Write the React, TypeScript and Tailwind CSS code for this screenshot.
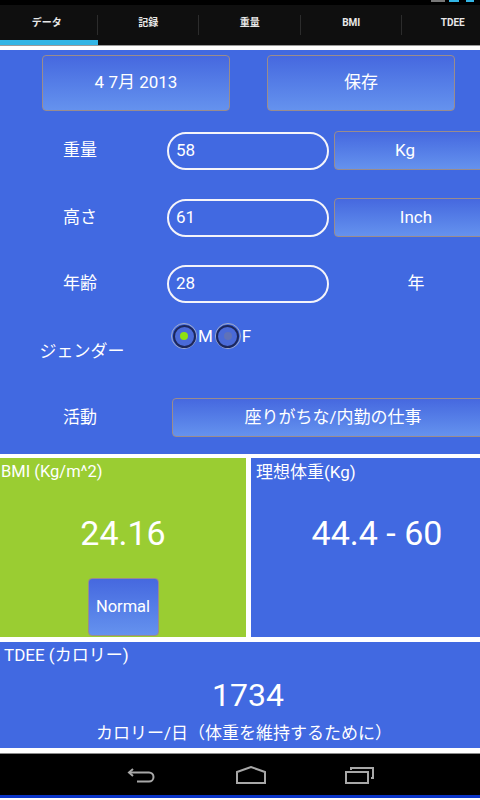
import React from "react";

const font = { fontFamily: "Roboto, 'Noto Sans CJK JP', sans-serif" };

const tabs = ["データ", "記録", "重量", "BMI", "TDEE"];

function GradButton({ children, className = "" }: { children: React.ReactNode; className?: string }) {
  return (
    <div
      className={`flex items-center justify-center rounded-[4px] border border-[#9a8c8c] bg-gradient-to-b from-[#4668df] to-[#6592ee] text-white ${className}`}
    >
      {children}
    </div>
  );
}

function Radio({ checked, label }: { checked: boolean; label: string }) {
  return (
    <div className="flex items-center">
      <div className="flex h-[26px] w-[26px] items-center justify-center rounded-full border border-[#a4acc8]">
        <div className="flex h-[23px] w-[23px] items-center justify-center rounded-full border-2 border-[#1c275c] bg-[#4a6ad8]">
          <div className={`h-[8px] w-[8px] rounded-full ${checked ? "bg-[#8fe010]" : "bg-[#6072b8]"}`} />
        </div>
      </div>
      <span className="ml-[1px] text-[17px] leading-none text-white">{label}</span>
    </div>
  );
}

function InputRow({ label, value, children }: { label: string; value: string; children: React.ReactNode }) {
  return (
    <div className="flex items-center">
      <div className="w-[160px] shrink-0 text-center text-[17px] text-white">{label}</div>
      <div className="ml-[7px] flex h-[38px] w-[162px] shrink-0 items-center rounded-[19px] border-2 border-[#f4f4fa] pl-[7px] text-[17px] text-white">
        {value}
      </div>
      {children}
    </div>
  );
}

export default function App() {
  return (
    <div className="relative h-[800px] w-[480px] overflow-hidden bg-white" style={font}>
      {/* status bar remains */}
      <div className="relative h-[5px] bg-black">
        <div className="absolute left-[431px] top-0 h-[2px] w-[14px] bg-[#777]" />
        <div className="absolute left-[449px] top-0 h-[2px] w-[10px] bg-[#33b5e5]" />
        <div className="absolute left-[466px] top-0 h-[2px] w-[8px] bg-[#33b5e5]" />
      </div>

      {/* tabs */}
      <div className="ml-[-4px] flex h-[40px] bg-[#0f0f0f]">
        {tabs.map((t, i) => (
          <div key={t} className="relative flex w-[101.5px] shrink-0 flex-col">
            <div className="flex flex-1 items-center justify-center text-[10px] font-bold text-[#e8e8e8]">{t}</div>
            {i === 0 ? <div className="ml-[4px] h-[5px] bg-[#33b5e5]" /> : <div className="h-[5px]" />}
            {i < 4 && <div className="absolute right-0 top-[10px] h-[20px] w-px bg-[#2c2c2c]" />}
          </div>
        ))}
      </div>
      <div className="h-px bg-[#9a9a9a]" />
      <div className="h-[4px] bg-white" />

      {/* form */}
      <div className="h-[404px] bg-[#4169e1] pt-[5px]">
        <div className="flex">
          <GradButton className="ml-[42px] h-[56px] w-[188px] shrink-0 text-[17px]">4 7月 2013</GradButton>
          <GradButton className="ml-[37px] h-[56px] w-[188px] shrink-0 text-[17px]">保存</GradButton>
        </div>

        <div className="mt-[20px]">
          <InputRow label="重量" value="58">
            <GradButton className="ml-[5px] h-[39px] w-[164px] shrink-0 pr-[22px] text-[17px]">Kg</GradButton>
          </InputRow>
        </div>
        <div className="mt-[28px]">
          <InputRow label="高さ" value="61">
            <GradButton className="ml-[5px] h-[39px] w-[164px] shrink-0 text-[17px]">Inch</GradButton>
          </InputRow>
        </div>
        <div className="mt-[28px]">
          <InputRow label="年齢" value="28">
            <div className="ml-[5px] w-[164px] shrink-0 text-center text-[17px] text-white">年</div>
          </InputRow>
        </div>

        <div className="mt-[20px] flex items-start">
          <div className="mt-[16px] w-[164px] shrink-0 text-center text-[17px] leading-[24px] text-white">ジェンダー</div>
          <div className="ml-[7px] flex gap-[2px]">
            <Radio checked label="M" />
            <Radio checked={false} label="F" />
          </div>
        </div>

        <div className="mt-[35px] flex items-center">
          <div className="w-[160px] shrink-0 text-center text-[17px] text-white">活動</div>
          <GradButton className="ml-[12px] h-[39px] w-[322px] shrink-0 text-[17px]">座りがちな/内勤の仕事</GradButton>
        </div>
      </div>

      <div className="h-[4px] bg-white" />

      {/* result cards */}
      <div className="flex h-[179px] gap-[5px]">
        <div className="flex w-[246px] shrink-0 flex-col items-center bg-[#9acd32]">
          <div className="self-start pl-[1px] pt-[4px] text-[16.5px] leading-[20px] text-white">BMI (Kg/m^2)</div>
          <div className="mt-[31px] text-[34px] leading-[40px] text-white">24.16</div>
          <GradButton className="mt-[25px] h-[58px] w-[71px] text-[16.5px]">Normal</GradButton>
        </div>
        <div className="flex flex-1 flex-col items-center bg-[#4169e1]">
          <div className="self-start pl-[5px] pt-[4px] text-[17px] leading-[20px] text-white">理想体重(Kg)</div>
          <div className="mt-[31px] pl-[23px] text-[34px] leading-[40px] text-white">44.4 - 60</div>
        </div>
      </div>

      <div className="h-[5px] bg-white" />

      <div className="flex h-[106px] flex-col items-center bg-[#4169e1]">
        <div className="self-start pl-[4px] pt-[3px] text-[17px] leading-[20px] text-white">TDEE (カロリー)</div>
        <div className="mt-[10px] pl-[16px] text-[32px] leading-[40px] text-white">1734</div>
        <div className="mt-[6px] pl-[8px] text-[17px] leading-[24px] text-white">カロリー/日（体重を維持するために）</div>
      </div>

      <div className="h-[5px] bg-white" />

      {/* nav bar */}
      <div className="h-px bg-[#8a8a8a]" />
      <div className="flex h-[41px] items-center gap-[78px] bg-black pl-[127px]">
        <svg width="30" height="16" viewBox="0 0 30 16" fill="none" stroke="#a8a8a8" strokeWidth="2">
          <path d="M6 2 L2 5.5 L6 9" />
          <path d="M2 5.5 H22 a4.5 4.5 0 0 1 0 9 H10" />
        </svg>
        <svg width="32" height="18" viewBox="0 0 32 18" fill="none" stroke="#a8a8a8" strokeWidth="2">
          <path d="M2 6 L16 1 L30 6 V17 H2 Z" />
        </svg>
        <svg width="30" height="18" viewBox="0 0 30 18" fill="none" stroke="#a8a8a8" strokeWidth="2">
          <path d="M6 4 V2 H28 V12 H26" />
          <rect x="1" y="6" width="22" height="11" />
        </svg>
      </div>
      <div className="h-[3px] bg-[#0a35c8]" />
      <div className="h-[2px] bg-white" />
    </div>
  );
}
